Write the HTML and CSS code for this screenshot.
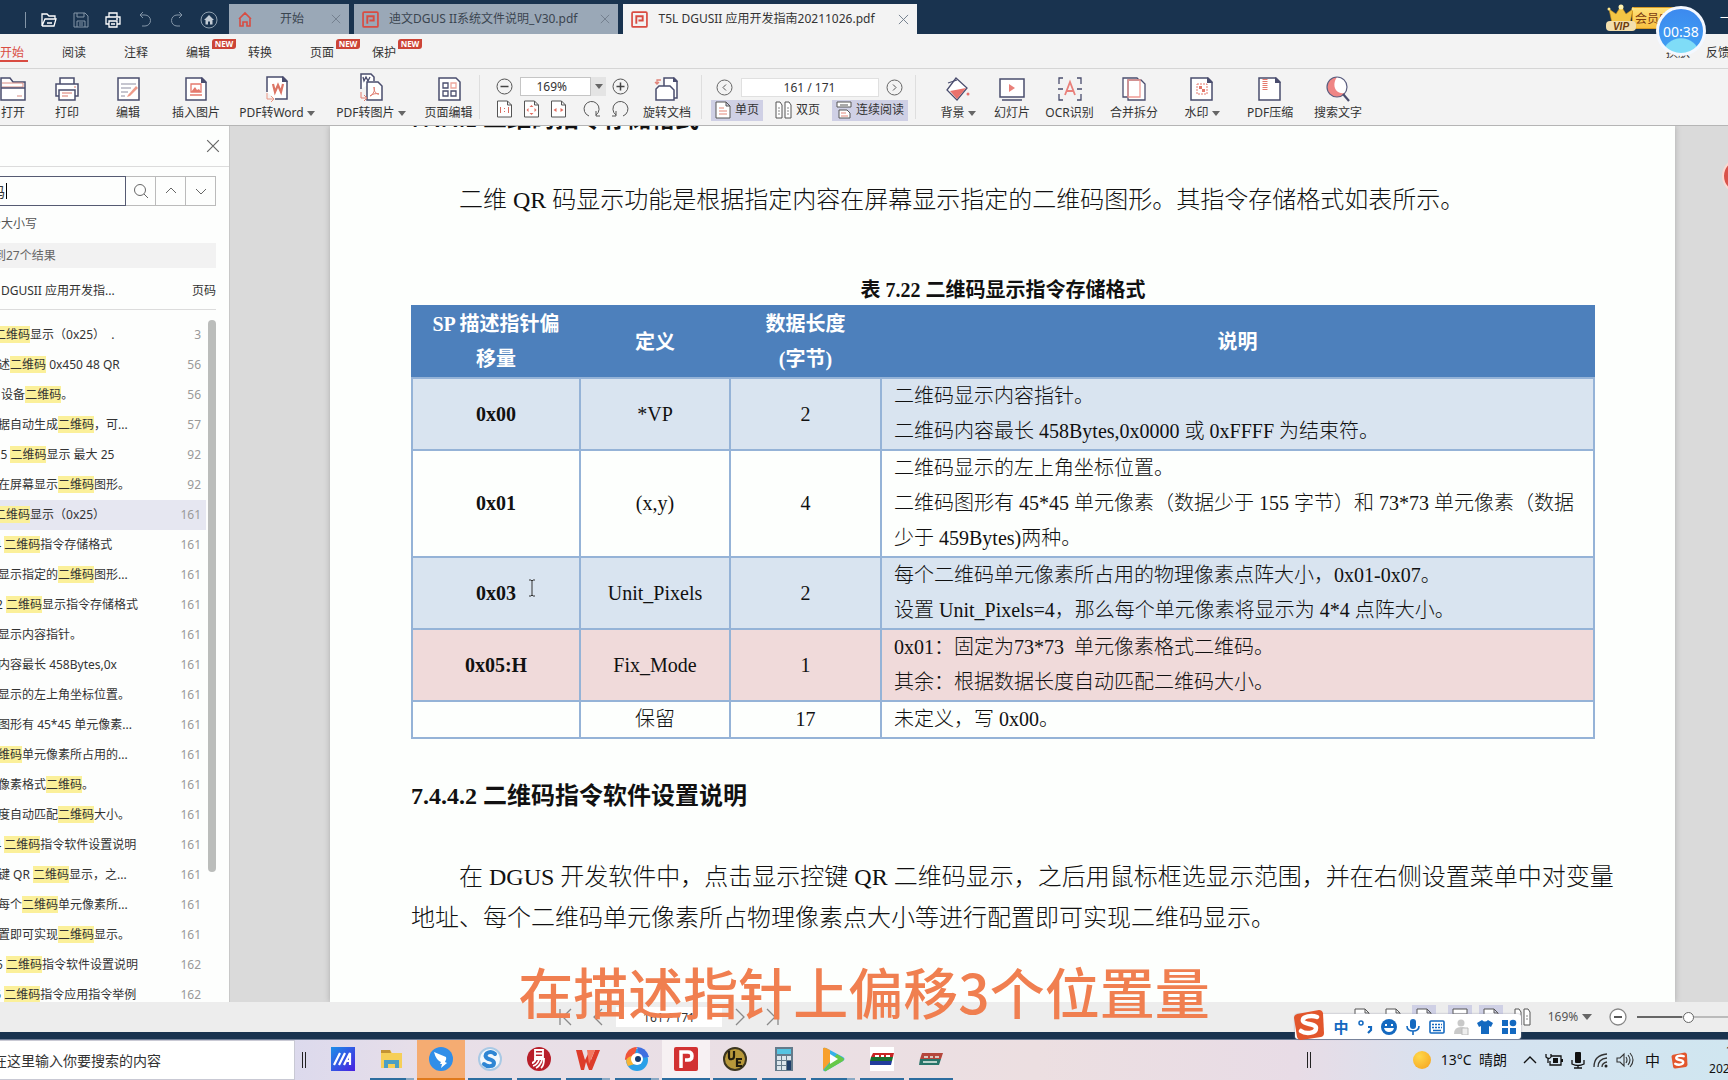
FILE: index.html
```html
<!DOCTYPE html>
<html lang="zh-CN">

<head>
    <meta charset="UTF-8" />
    <meta name="viewport" content="width=device-width, initial-scale=1.0" />
    <title>T5L DGUSII 应用开发指南20211026.pdf</title>
    <link rel="stylesheet" href="styles.css">
</head>

<body>
    <!-- shared shapes -->
    <svg class="defs" aria-hidden="true">
        <symbol id="close" viewBox="0 0 12 12"><path d="M1 1l10 10M11 1L1 11" fill="none" stroke="currentColor" /></symbol>
        <symbol id="pdf" viewBox="0 0 16 16"><rect x="1" y="1" width="14" height="14" rx="1" fill="none" stroke="currentColor" stroke-width="1.6" /><path d="M5 12V5h6v4H7" fill="none" stroke="currentColor" stroke-width="1.8" /></symbol>
        <symbol id="page" viewBox="0 0 16 18"><path d="M1 1h10l4 4v12H1zM11 1v4h4" fill="#fff" stroke="#555" /></symbol>
        <symbol id="sogou" viewBox="0 0 32 32"><path d="M4 5l22-4q3 0 4 3l1 20q0 3-3 4L8 31q-3 0-4-3L1 9q0-3 3-4z" fill="#e2562c" /><path d="M24 8c-5-2-15-1-14 4 1 4 13 2 13 7 0 6-11 6-15 3" fill="none" stroke="#fff" stroke-width="4.5" stroke-linecap="round" /></symbol>
    </svg>

    <header class="titlebar">
        <div class="quick">
            <span class="quick-line"></span>
            <button title="打开"><svg width="16" height="16" viewBox="0 0 16 16"><path d="M1 14V2h5l2 2h6v3M1 14h12l2-7H4L1 14M6 11h5" fill="none" stroke="#fff" stroke-width="1.3" /></svg></button>
            <button title="保存"><svg width="16" height="16" viewBox="0 0 16 16"><path d="M1 1h11l3 3v11H1zM4 1v4h7V1M4 15V9h8v6M6 11h4M6 13h4" fill="none" stroke="#8496a8" /></svg></button>
            <button title="打印"><svg width="16" height="16" viewBox="0 0 16 16"><path d="M4 5V1h8v4M4 12H1V5h14v7h-3M4 9h8v6H4zM6 12h4M11 7h2" fill="none" stroke="#fff" stroke-width="1.3" /></svg></button>
            <button title="撤销"><svg width="16" height="16" viewBox="0 0 16 16"><path d="M3 3h5a5 5 0 0 1 0 11H5M6 0L3 3l3 3" fill="none" stroke="#8496a8" /></svg></button>
            <button title="重做"><svg width="16" height="16" viewBox="0 0 16 16"><path d="M13 3H8a5 5 0 0 0 0 11h3M10 0l3 3-3 3" fill="none" stroke="#8496a8" /></svg></button>
            <button title="首页"><svg width="18" height="18" viewBox="0 0 18 18"><circle cx="9" cy="9" r="8" fill="none" stroke="#8fa0b0" /><path d="M9 4L4 9h1.500v4.500h2.500v-3h2v3h2.500V9H14z" fill="#c3ccd5" /></svg></button>
        </div>
        <nav class="tabs">
            <div class="tab tab-home">
                <svg class="red" width="16" height="16" viewBox="0 0 16 16"><path d="M2 8l6-6 6 6M3 7v8h3v-4h4v4h3V7" fill="none" stroke="currentColor" stroke-width="1.600" /></svg>
                <a href="#start">开始</a>
                <button title="关闭"><svg width="10" height="10"><use href="#close" /></svg></button>
            </div>
            <div class="tab tab-doc">
                <svg class="red" width="17" height="17"><use href="#pdf" /></svg>
                <a href="#v30">迪文DGUS II系统文件说明_V30.pdf</a>
                <button title="关闭"><svg width="10" height="10"><use href="#close" /></svg></button>
            </div>
            <div class="tab tab-doc active">
                <svg class="red" width="17" height="17"><use href="#pdf" /></svg>
                <a href="#t5l">T5L DGUSII 应用开发指南20211026.pdf</a>
                <button title="关闭"><svg width="11" height="11"><use href="#close" /></svg></button>
            </div>
        </nav>
        <div class="vip">
            <svg width="30" height="28" viewBox="0 0 30 28"><path d="M3 5l7 5 5-8 5 8 7-5-3 14H6z" fill="#f4c544" stroke="#c98e1c" stroke-width=".6" /><circle cx="15" cy="3" r="2.500" fill="#fff2b0" /><circle cx="3" cy="5" r="1.500" fill="#ffe58a" /><circle cx="27" cy="5" r="1.500" fill="#ffe58a" /><rect x="0" y="17" width="30" height="10" rx="4" fill="#f3dfae" /><text x="15" y="26" text-anchor="middle" class="vip-text">VIP</text></svg>
            <a href="#vip">会员中心</a>
        </div>
        <button class="minimize" title="最小化">—</button>
    </header>

    <nav class="menu">
        <a class="current" href="#m1">开始</a>
        <a href="#m2">阅读</a>
        <a href="#m3">注释</a>
        <a href="#m4">编辑<sup>NEW</sup></a>
        <a href="#m5">转换</a>
        <a href="#m6">页面<sup>NEW</sup></a>
        <a href="#m7">保护<sup>NEW</sup></a>
        <span class="menu-right"><a href="#skin">换肤</a><a href="#feedback">反馈</a></span>
    </nav>

    <div class="toolbar">
        <button class="tool w-s first"><svg width="26" height="26" viewBox="0 0 26 26"><path d="M1 24V2h9l3 4h12v18z" fill="#fff" stroke="#4a4d6e" stroke-width="1.500" /><path d="M2 7h21v4H2M17 20h5" fill="none" stroke="#d98a80" /><path d="M1 12h24" stroke="#4a4d6e" stroke-width="1.500" /></svg><span>打开</span></button>
        <button class="tool w-s"><svg width="26" height="26" viewBox="0 0 26 26"><path d="M6 8V2h14v6M5 20H2V8h22v12h-3M5 14h16v10H5z" fill="#fff" stroke="#4a4d6e" stroke-width="1.500" /><path d="M8 17h10M8 20h6M20 11h2" stroke="#d9776b" /></svg><span>打印</span></button>
        <button class="tool w-m"><svg width="26" height="26" viewBox="0 0 26 26"><rect x="3" y="2" width="21" height="22" fill="#fff" stroke="#4a4d6e" stroke-width="1.500" /><path d="M6 8h15M6 12h10M6 16h7M6 20h4" stroke="#8d8da0" /><path d="M13 19l8-9 2 2-8 8-3 1z" fill="#ee9c8b" /></svg><span>编辑</span></button>
        <button class="tool w-m"><svg width="26" height="26" viewBox="0 0 26 26"><path d="M3 2h16l4 4v18H3z" fill="#fff" stroke="#4a4d6e" stroke-width="1.500" /><path d="M18 1l6 6h-6z" fill="#4a4d6e" /><path d="M8 8h10v8H8zM7 19h12" fill="none" stroke="#e5796d" stroke-width="1.300" /><path d="M8 16l4-5 2 3 2-1 2 3z" fill="#e5796d" /></svg><span>插入图片</span></button>
        <button class="tool w-l"><svg width="26" height="26" viewBox="0 0 26 26"><path d="M3 16V1h16l4 4v18H11" fill="#fff" stroke="#4a4d6e" stroke-width="1.500" /><path d="M18 0l6 6h-6z" fill="#4a4d6e" /><path d="M9 8l2 8 3-7 3 7 2-8" fill="none" stroke="#dc7565" stroke-width="2.200" /><path d="M3 17v6h6M7 20l3 3-3 3" fill="none" stroke="#ea9583" /></svg><span>PDF转Word <i class="arrow"></i></span></button>
        <button class="tool w-l"><svg width="26" height="30" viewBox="0 0 26 30"><path d="M3 17V2h10l3 3v4" fill="#fff" stroke="#4a4d6e" stroke-width="1.500" /><path d="M5 5l1 4 2-4 2 4 2-4" fill="none" stroke="#4a4d6e" stroke-width="1.300" /><path d="M9 10h11l4 4v14H9z" fill="#fff" stroke="#4a4d6e" stroke-width="1.500" /><path d="M12 24c4-2 5-6 4-9 0 5 2 7 5 7-4-1-6 0-9 2M3 20v6h5M6 23l3 3-3 3" fill="none" stroke="#e07b6e" /></svg><span>PDF转图片 <i class="arrow"></i></span></button>
        <button class="tool w-p"><svg width="26" height="26" viewBox="0 0 26 26"><path d="M3 2h17l4 4v18H3z" fill="#fff" stroke="#4a4d6e" stroke-width="1.500" /><path d="M7 7h5v5H7zM7 15h5v5H7zM15 15h5v5h-5z" fill="none" stroke="#4a4d6e" stroke-width="1.300" /><path d="M15 7h5v5h-5z" fill="none" stroke="#eda79d" stroke-width="1.300" /></svg><span>页面编辑</span></button>
        <i class="sep"></i>

        <div class="zoom">
            <div class="zoom-row">
                <button title="缩小"><svg width="17" height="17" viewBox="0 0 17 17"><path d="M4.500 8.500h8" stroke="#444" stroke-width="1.500" /><circle cx="8.500" cy="8.500" r="7.500" fill="none" stroke="#555" /></svg></button>
                <span class="zoom-box"><select aria-label="缩放比例"><option>169%</option></select><i class="arrow"></i></span>
                <button title="放大"><svg width="17" height="17" viewBox="0 0 17 17"><path d="M4.500 8.500h8M8.500 4.500v8" stroke="#444" stroke-width="1.500" /><circle cx="8.500" cy="8.500" r="7.500" fill="none" stroke="#555" /></svg></button>
            </div>
            <div class="zoom-row">
                <button title="实际大小"><svg width="17" height="18" viewBox="0 0 16 18"><use href="#page" /><path d="M4 7v6M12 7v6M3.500 8l1-1M11.500 8l1-1M8 8v1M8 11v1" stroke="#d86a5e" /></svg></button>
                <button title="适合页面"><svg width="17" height="18" viewBox="0 0 16 18"><use href="#page" /><path d="M8 5l2 2H6zM8 15l2-2H6zM3 10l2-2v4zM13 10l-2-2v4z" fill="#e36d60" /></svg></button>
                <button title="适合宽度"><svg width="17" height="18" viewBox="0 0 16 18"><use href="#page" /><path d="M3 10l3-2v4zM13 10l-3-2v4z" fill="#e36d60" /></svg></button>
                <button title="顺时针" class="turn"><svg width="18" height="18" viewBox="0 0 18 18"><path d="M6 16A7.500 7.500 0 1 1 13 15M13 11v5h4" fill="none" stroke="#555" /></svg></button>
                <button title="逆时针"><svg width="18" height="18" viewBox="0 0 18 18"><path d="M12 16A7.500 7.500 0 1 0 5 15M5 11v5H1" fill="none" stroke="#555" /></svg></button>
            </div>
        </div>
        <button class="tool w-m"><svg width="26" height="26" viewBox="0 0 26 26"><path d="M10 10V2h10l3 3v17h-4" fill="#fff" stroke="#4a4d6e" stroke-width="1.500" /><path d="M19 1l5 5h-5z" fill="#4a4d6e" /><path d="M5 10h11l4 4v10H2V13z" fill="#fff" stroke="#4a4d6e" stroke-width="1.500" /><path d="M3 8V4h4M1 6l2 2 2-2" fill="none" stroke="#e08278" stroke-width="1.300" /></svg><span>旋转文档</span></button>
        <i class="sep"></i>

        <div class="paging">
            <div class="paging-row">
                <button title="上一页"><svg width="17" height="17" viewBox="0 0 17 17"><circle cx="8.500" cy="8.500" r="7.500" fill="none" stroke="#666" /><path d="M10 5.500l-3 3 3 3" fill="none" stroke="#555" /></svg></button>
                <input type="text" value="161 / 171" aria-label="页码">
                <button title="下一页"><svg width="17" height="17" viewBox="0 0 17 17"><circle cx="8.500" cy="8.500" r="7.500" fill="none" stroke="#666" /><path d="M7 5.500l3 3-3 3" fill="none" stroke="#555" /></svg></button>
            </div>
            <div class="views">
                <button class="on"><svg width="16" height="18" viewBox="0 0 16 18"><use href="#page" /><path d="M4 7h5M4 10h8M4 13h8" stroke="#e28779" /></svg>单页</button>
                <button><svg width="17" height="18" viewBox="0 0 17 18"><path d="M1 1h4l2 3v13H1zM10 1h4l2 3v13h-6z" fill="#fff" stroke="#555" /><path d="M3 7h2M3 10h2M3 13h2M12 7h2M12 10h2M12 13h2" stroke="#888" /></svg>双页</button>
                <button class="on"><svg width="16" height="18" viewBox="0 0 16 18"><path d="M1 1h14v5H1zM3 17V9h8l3 3v5z" fill="#fff" stroke="#555" /><path d="M4 4h8" stroke="#555" /><path d="M5 12h5M5 15h7" stroke="#e28779" /></svg>连续阅读</button>
            </div>
        </div>
        <i class="sep"></i>

        <button class="tool w-s push"><svg width="26" height="26" viewBox="0 0 26 26"><path d="M11 2l11 10-10 12L2 14z" fill="#fff" stroke="#4a4d6e" stroke-width="1.300" /><path d="M5 15l16-3-9 11z" fill="#e9716c" /><path d="M3 7l9-3" stroke="#4a4d6e" stroke-width="1.300" /><circle cx="23" cy="18" r="1.500" fill="#e9716c" /></svg><span>背景 <i class="arrow"></i></span></button>
        <button class="tool w-s"><svg width="26" height="26" viewBox="0 0 26 26"><path d="M1 3h24v18H1zM3 24h20" fill="#fff" stroke="#4a4d6e" stroke-width="1.500" /><path d="M10 8l6 4-6 4z" fill="#e9807a" /></svg><span>幻灯片</span></button>
        <button class="tool w-p"><svg width="26" height="26" viewBox="0 0 26 26"><path d="M6 2H2v6M20 2h4v6M6 24H2v-6M20 24h4v-6M1 13h5M20 13h5" fill="none" stroke="#4a4d6e" stroke-width="1.300" /><path d="M8 19l5-13 5 13M10 15h6" fill="none" stroke="#e9807a" stroke-width="1.800" /></svg><span>OCR识别</span></button>
        <button class="tool w-m"><svg width="26" height="26" viewBox="0 0 26 26"><path d="M2 2h14l3 3v16H2z" fill="#fff" stroke="#4a4d6e" stroke-width="1.300" /><path d="M7 4h13l4 4v16H7z" fill="#fff" stroke="#4a4d6e" stroke-width="1.300" /><path d="M7 4h12v17H7z" fill="none" stroke="#f09a94" stroke-width="1.300" /></svg><span>合并拆分</span></button>
        <button class="tool w-m"><svg width="26" height="26" viewBox="0 0 26 26"><path d="M2 2h17l4 4v18H2z" fill="#fff" stroke="#4a4d6e" stroke-width="1.500" /><path d="M18 1l6 6h-6z" fill="#4a4d6e" /><path d="M8 8h10v10H8z" fill="none" stroke="#e5796d" stroke-dasharray="2 1" /><path d="M10 10h3v3h-3zM13 13h3v3h-3z" fill="#e5796d" /></svg><span>水印 <i class="arrow"></i></span></button>
        <button class="tool w-m"><svg width="26" height="26" viewBox="0 0 26 26"><path d="M2 2h17l4 4v18H2z" fill="#fff" stroke="#4a4d6e" stroke-width="1.500" /><path d="M18 1l6 6h-6z" fill="#4a4d6e" /><path d="M8 3v11" stroke="#e5796d" stroke-width="5" stroke-dasharray="1 1" /></svg><span>PDF压缩</span></button>
        <button class="tool w-m"><svg width="26" height="26" viewBox="0 0 26 26"><circle cx="12" cy="11" r="10" fill="#fff" /><path d="M12 1a10 10 0 1 0 8 16C11 19 6 10 12 1z" fill="#ef8685" /><circle cx="12" cy="11" r="10" fill="none" stroke="#5b5f80" stroke-width="1.200" /><path d="M18 18l6 7" stroke="#4a4d6e" stroke-width="2.200" /></svg><span>搜索文字</span></button>
    </div>

    <main class="workspace">
        <aside class="finder">
            <div class="finder-head"><button title="关闭"><svg width="14" height="14"><use href="#close" /></svg></button></div>
            <div class="finder-body">
                <div class="search-row">
                    <input type="text" value="二维码" aria-label="查找">
                    <span class="caret"></span>
                    <button title="查找"><svg width="16" height="16" viewBox="0 0 16 16"><circle cx="7" cy="7" r="5.500" fill="none" stroke="#666" /><path d="M11 11l4 4" stroke="#666" /></svg></button>
                    <button title="上一个"><svg width="12" height="12" viewBox="0 0 12 12"><path d="M1 8l5-5 5 5" fill="none" stroke="#666" /></svg></button>
                    <button title="下一个"><svg width="12" height="12" viewBox="0 0 12 12"><path d="M1 4l5 5 5-5" fill="none" stroke="#666" /></svg></button>
                </div>
                <label class="match-case"><input type="checkbox">区分大小写</label>
                <p class="found">查找到27个结果</p>
                <div class="list-head"><span>T5L DGUSII 应用开发指...</span><span>页码</span></div>
            </div>
            <div class="results">
                <ul>
                    <li><a href="#r1">7.1 <mark>二维码</mark>显示（0x25）&nbsp; .</a><span>3</span></li>
                    <li><a href="#r2">的描述<mark>二维码</mark> 0x450 48 QR</a><span>56</span></li>
                    <li><a href="#r3">连接 设备<mark>二维码</mark>。</a><span>56</span></li>
                    <li><a href="#r4">用数据自动生成<mark>二维码</mark>，可...</a><span>57</span></li>
                    <li><a href="#r5">: 0x25 <mark>二维码</mark>显示 最大 25</a><span>92</span></li>
                    <li><a href="#r6">内容在屏幕显示<mark>二维码</mark>图形。</a><span>92</span></li>
                    <li class="selected"><a href="#r7">4.4 <mark>二维码</mark>显示（0x25）</a><span>161</span></li>
                    <li><a href="#r8">7.4.4 <mark>二维码</mark>指令存储格式</a><span>161</span></li>
                    <li><a href="#r9">屏幕显示指定的<mark>二维码</mark>图形...</a><span>161</span></li>
                    <li><a href="#r10">表 22 <mark>二维码</mark>显示指令存储格式</a><span>161</span></li>
                    <li><a href="#r11"><mark>维码</mark>显示内容指针。</a><span>161</span></li>
                    <li><a href="#r12"><mark>维码</mark>内容最长 458Bytes,0x</a><span>161</span></li>
                    <li><a href="#r13"><mark>维码</mark>显示的左上角坐标位置。</a><span>161</span></li>
                    <li><a href="#r14"><mark>维码</mark>图形有 45*45 单元像素...</a><span>161</span></li>
                    <li><a href="#r15">个<mark>二维码</mark>单元像素所占用的...</a><span>161</span></li>
                    <li><a href="#r16">单元像素格式<mark>二维码</mark>。</a><span>161</span></li>
                    <li><a href="#r17">据长度自动匹配<mark>二维码</mark>大小。</a><span>161</span></li>
                    <li><a href="#r18">7.4.4 <mark>二维码</mark>指令软件设置说明</a><span>161</span></li>
                    <li><a href="#r19">示控键 QR <mark>二维码</mark>显示，之...</a><span>161</span></li>
                    <li><a href="#r20">址、每个<mark>二维码</mark>单元像素所...</a><span>161</span></li>
                    <li><a href="#r21">行配置即可实现<mark>二维码</mark>显示。</a><span>161</span></li>
                    <li><a href="#r22">表 25 <mark>二维码</mark>指令软件设置说明</a><span>162</span></li>
                    <li><a href="#r23">7.4.5 <mark>二维码</mark>指令应用指令举例</a><span>162</span></li>
                </ul>
                <div class="scrollbar"></div>
            </div>
        </aside>

        <article class="paper">
            <h2>7.4.4.1 二维码指令存储格式</h2>
            <p>二维 QR 码显示功能是根据指定内容在屏幕显示指定的二维码图形。其指令存储格式如表所示。</p>
            <table>
                <caption>表 7.22 二维码显示指令存储格式</caption>
                <colgroup><col class="col-sp"><col class="col-def"><col class="col-len"><col></colgroup>
                <thead>
                    <tr><th>SP 描述指针偏<br>移量</th><th>定义</th><th>数据长度<br>(字节)</th><th>说明</th></tr>
                </thead>
                <tbody>
                    <tr class="blue"><th>0x00</th><td>*VP</td><td>2</td><td>二维码显示内容指针。<br>二维码内容最长 458Bytes,0x0000 或 0xFFFF 为结束符。</td></tr>
                    <tr><th>0x01</th><td>(x,y)</td><td>4</td><td>二维码显示的左上角坐标位置。<br>二维码图形有 45*45 单元像素（数据少于 155 字节）和 73*73 单元像素（数据少于 459Bytes)两种。</td></tr>
                    <tr class="blue"><th>0x03</th><td>Unit_Pixels</td><td>2</td><td>每个二维码单元像素所占用的物理像素点阵大小，0x01-0x07。<br>设置 Unit_Pixels=4，那么每个单元像素将显示为 4*4 点阵大小。</td></tr>
                    <tr class="pink"><th>0x05:H</th><td>Fix_Mode</td><td>1</td><td>0x01：固定为73*73&nbsp; 单元像素格式二维码。<br>其余：根据数据长度自动匹配二维码大小。</td></tr>
                    <tr><th></th><td>保留</td><td>17</td><td>未定义，写 0x00。</td></tr>
                </tbody>
            </table>
            <h2>7.4.4.2 二维码指令软件设置说明</h2>
            <p>在 DGUS 开发软件中，点击显示控键 QR 二维码显示，之后用鼠标框选显示范围，并在右侧设置菜单中对变量<br>地址、每个二维码单元像素所占物理像素点大小等进行配置即可实现二维码显示。</p>
        </article>
        <svg class="ibeam" width="8" height="18" viewBox="0 0 8 18"><path d="M1 1h2l1 1 1-1h2M4 2v14M1 17h2l1-1 1 1h2" fill="none" stroke="#333" /></svg>
        <span class="side-bubble"></span>
    </main>

    <footer class="statusbar">
        <div class="pager">
            <button title="首页"><svg width="14" height="18" viewBox="0 0 14 18"><path d="M1 1v16M12 1L4 9l8 8" fill="none" stroke="#8a8a8a" stroke-width="1.300" /></svg></button>
            <button title="上一页"><svg width="14" height="18" viewBox="0 0 14 18"><path d="M11 1L3 9l8 8" fill="none" stroke="#8a8a8a" stroke-width="1.300" /></svg></button>
            <input type="text" value="161 / 171" aria-label="当前页">
            <button title="下一页"><svg width="14" height="18" viewBox="0 0 14 18"><path d="M3 1l8 8-8 8" fill="none" stroke="#8a8a8a" stroke-width="1.300" /></svg></button>
            <button title="末页"><svg width="14" height="18" viewBox="0 0 14 18"><path d="M2 1l8 8-8 8M13 1v16" fill="none" stroke="#8a8a8a" stroke-width="1.300" /></svg></button>
        </div>
        <div class="status-right">
            <button title="实际大小"><svg width="16" height="18"><use href="#page" /></svg></button>
            <button title="适合页面"><svg width="16" height="18"><use href="#page" /></svg></button>
            <button title="适合宽度" class="on"><svg width="16" height="18"><use href="#page" /></svg></button>
            <button title="连续" class="on gap"><svg width="16" height="18" viewBox="0 0 16 18"><path d="M1 1h14v5H1zM1 17V9h14v8" fill="#fff" stroke="#555" /></svg></button>
            <button title="单页" class="on"><svg width="16" height="18"><use href="#page" /></svg></button>
            <button title="双页"><svg width="17" height="18" viewBox="0 0 17 18"><path d="M1 1h4l2 3v13H1zM10 1h4l2 3v13h-6z" fill="#fff" stroke="#555" /><path d="M12 8h2M12 11h2" stroke="#888" /></svg></button>
            <button class="percent">169% <i class="arrow"></i></button>
            <button title="缩小"><svg width="18" height="18" viewBox="0 0 18 18"><circle cx="9" cy="9" r="8" fill="#fff" stroke="#888" stroke-width="1.300" /><path d="M5 9h8" stroke="#444" stroke-width="1.800" /></svg></button>
            <input type="range" min="0" max="100" value="40" aria-label="缩放">
        </div>
    </footer>

    <div class="taskbar">
        <input class="task-search" type="text" placeholder="在这里输入你要搜索的内容" aria-label="搜索">
        <i class="grip"></i>
        <div class="apps">
            <button title="MA"><svg width="26" height="26" viewBox="0 0 26 26"><defs><linearGradient id="ma" x2="1" y2="1"><stop stop-color="#1b8fe8" /><stop offset="1" stop-color="#4a1fe0" /></linearGradient></defs><path d="M1 1h24v24H1z" fill="url(#ma)" /><path d="M4 19l6-12M9 19l6-12M14 19l6-12v12M17 15h3" stroke="#fff" stroke-width="2.200" fill="none" /></svg></button>
            <button title="文件" class="run more"><svg width="26" height="26" viewBox="0 0 26 26"><path d="M2 4h9l2 3h10v15H2z" fill="#f6cf58" /><path d="M2 4h9l1 3H2z" fill="#c49434" /><path d="M5 22v-8h15v8h-4v-4H9v4z" fill="#4c9fc4" /></svg></button>
            <button title="钉钉" class="run hot"><svg width="26" height="26" viewBox="0 0 26 26"><circle cx="13" cy="13" r="12" fill="#318ee8" /><path d="M6 6l12 5q1 2-1 5l2 1-6 5 1-4h-2l1-2q-5-2-7-10z" fill="#fff" /></svg></button>
            <button title="搜狗浏览器" class="run"><svg width="26" height="26" viewBox="0 0 26 26"><circle cx="13" cy="13" r="11" fill="#f3f8fc" stroke="#a9c9e5" stroke-width="2" /><path d="M18 8c-4-4-11-1-9 3 1 3 8 2 8 6s-7 4-10 1" fill="none" stroke="#2e86d4" stroke-width="4" stroke-linecap="round" /></svg></button>
            <button title="易语言" class="run"><svg width="26" height="26" viewBox="0 0 26 26"><circle cx="13" cy="13" r="12" fill="#b81f2a" /><path d="M9 4h8v7H9zM9 7.500h8M8 13h10q0 7-3 9M10 13q-2 4-4 4M13 14q-2 5-6 6M16 14q-2 6-6 8" fill="none" stroke="#fff" stroke-width="1.800" /></svg></button>
            <button title="WPS" class="run more"><svg width="26" height="26" viewBox="0 0 26 26"><path d="M1 4h6l3 10 3-6 3 6 4-10h5l-8 20h-3l-3-8-2 8H6z" fill="#dd3c2a" /><path d="M12 4h8l-6 14z" fill="#f4775f" /></svg></button>
            <button title="看图" class="run more"><svg width="26" height="26" viewBox="0 0 26 26"><circle cx="13" cy="14" r="11" fill="#2aa0e8" /><path d="M13 1a12 12 0 0 0-12 13l9-3z" fill="#f0543a" /><path d="M13 1q9 0 12 10l-9 1z" fill="#3f6fe0" /><path d="M4 20q-5-8 4-10l3 8z" fill="#f8b432" /><circle cx="13" cy="13" r="6" fill="#fff" /><circle cx="14" cy="13" r="3" fill="#143a6c" /></svg></button>
            <button title="PDF" class="run front"><svg width="26" height="26" viewBox="0 0 26 26"><rect x="1" y="1" width="24" height="24" rx="2" fill="#d23232" /><path d="M8 22V6h7q4 0 4 4t-4 4h-3" fill="none" stroke="#fff" stroke-width="3.500" /></svg></button>
            <button title="UltraEdit" class="run"><svg width="26" height="26" viewBox="0 0 26 26"><circle cx="13" cy="13" r="11" fill="#b7983a" stroke="#3c3620" stroke-width="2" /><path d="M7 5v6q0 3 3 2 2 0 2-3V5M20 13h-5v7h5M15 16.500h4" fill="none" stroke="#211c0c" stroke-width="2.200" /></svg></button>
            <button title="计算器" class="run"><svg width="26" height="26" viewBox="0 0 26 26"><path d="M4 1h18v24H4z" fill="#657b8b" /><path d="M6 3h14v5H6z" fill="#55c4e2" /><path d="M6 10h4v4H6zM11 10h4v4h-4zM6 15h4v4H6zM11 15h4v4h-4zM6 20h4v4H6zM11 20h4v4h-4zM16 10h4v4h-4z" fill="#dce6ec" /><path d="M16 15h4v9h-4z" fill="#1e3e69" /></svg></button>
            <button title="视频" class="run more"><svg width="26" height="26" viewBox="0 0 26 26"><path d="M3 3q0-2 3-1l17 9q3 2 0 4L6 25q-3 1-3-2z" fill="#35b1e8" /><path d="M3 3q0-2 3-1l4 2v12l-7 8z" fill="#f8a02c" /><path d="M4 24L17 8l6 4q2 1 0 3L6 25q-1 1-2-1z" fill="#67c848" /><path d="M10 8l8 5-8 5z" fill="#fff" /></svg></button>
            <button title="DGUS" class="run"><svg width="26" height="26" viewBox="0 0 26 26"><path d="M1 1h24v24H1z" fill="#fff" /><path d="M4 7h21l-1 4H2z" fill="#c82525" /><path d="M2 11h22l-1 4H1z" fill="#1a6f2e" /><path d="M1 15h22l-1 4H1z" fill="#223c9c" /><path d="M6 10h4M12 10h3M17 10h4" stroke="#fff" stroke-width="2" /></svg></button>
            <button title="DWIN" class="run"><svg width="26" height="26" viewBox="0 0 26 26"><path d="M4 7h21l-2 6H2z" fill="#b5473c" /><path d="M2 13h21l-2 6H1z" fill="#28756a" /><path d="M6 11h4M12 11h3M17 11h4M5 16h14" stroke="#e8f2ec" stroke-width="1.500" /></svg></button>
        </div>
        <i class="grip tray-grip"></i>
        <div class="tray">
            <span class="sun"></span>
            <span class="weather">13°C&nbsp; 晴朗</span>
            <button title="展开"><svg width="16" height="16" viewBox="0 0 16 16"><path d="M2 11l6-6 6 6" fill="none" stroke="#111" stroke-width="1.400" /></svg></button>
            <button title="电源"><svg width="18" height="16" viewBox="0 0 18 16"><path d="M6 4h10v9H5V9M1 2v3q3 3 5 0V2M3 6v5" fill="none" stroke="#111" stroke-width="1.300" /><path d="M8 6h5v5H8zM16 7h2v3h-2z" fill="#111" /></svg></button>
            <button title="麦克风"><svg width="16" height="18" viewBox="0 0 16 18"><rect x="5" y="1" width="6" height="11" rx="1" fill="#111" /><path d="M2 9v4q6 3 12 0V9M8 14v3M4 17h8" fill="none" stroke="#111" stroke-width="1.300" /></svg></button>
            <button title="网络"><svg width="16" height="16" viewBox="0 0 16 16"><path d="M1 15Q1 3 14 2M5 15Q5 7 14 6M9 15Q9 11 14 10" fill="none" stroke="#333" stroke-width="1.300" /><circle cx="13" cy="14" r="1.500" fill="#222" /></svg></button>
            <button title="音量"><svg width="18" height="16" viewBox="0 0 18 16"><path d="M1 6h3l4-4v12l-4-4H1zM10 5q2 3 0 6M12 3q4 5 0 10M14 1q6 7 0 14" fill="none" stroke="#333" stroke-width="1.100" /></svg></button>
            <button class="lang">中</button>
            <button title="搜狗"><svg width="17" height="17"><use href="#sogou" /></svg></button>
        </div>
        <div class="clock"><span>14:26</span><span>2021/11/16</span></div>
    </div>

    <!-- things floating over the desktop -->
    <div class="timer">00:38</div>
    <p class="subtitle">在描述指针上偏移3个位置量</p>
    <div class="ime">
        <svg class="ime-logo" width="32" height="32"><use href="#sogou" /></svg>
        <button class="ime-zh">中</button>
        <button title="标点"><svg width="16" height="16" viewBox="0 0 16 16"><circle cx="4" cy="4" r="2" fill="none" stroke="#1469c0" stroke-width="1.500" /><path d="M11 8h3v3l-3 3" fill="none" stroke="#1469c0" stroke-width="2.200" /></svg></button>
        <button title="表情"><svg width="16" height="16" viewBox="0 0 16 16"><circle cx="8" cy="8" r="8" fill="#1469c0" /><path d="M4 5h2v2H4zM10 5h2v2h-2zM3 9h10q-1 4-5 4T3 9z" fill="#fff" /></svg></button>
        <button title="语音"><svg width="16" height="16" viewBox="0 0 16 16"><rect x="5" y="0" width="6" height="10" rx="3" fill="#1469c0" /><path d="M2 7q0 5 6 5t6-5M8 12v4" fill="none" stroke="#1469c0" stroke-width="1.600" /></svg></button>
        <button title="键盘"><svg width="16" height="16" viewBox="0 0 16 16"><rect x="1" y="2" width="14" height="12" rx="1" fill="none" stroke="#1469c0" stroke-width="1.600" /><path d="M3 5.500h10M3 8.500h10" stroke="#1469c0" stroke-width="1.600" stroke-dasharray="2 1" /><path d="M4 11.500h8" stroke="#1469c0" stroke-width="1.500" /></svg></button>
        <button title="用户"><svg width="16" height="16" viewBox="0 0 16 16"><circle cx="8" cy="4" r="3.500" fill="#c9c9c9" /><path d="M1 15q0-7 7-7t7 7z" fill="#c9c9c9" /><path d="M9 9h6v7H9z" fill="#eee" stroke="#bbb" /></svg></button>
        <button title="皮肤"><svg width="16" height="16" viewBox="0 0 16 16"><path d="M5 1q3 3 6 0l5 3-2 4-2-1v8H4V7L2 8 0 4z" fill="#1469c0" /></svg></button>
        <button title="工具"><svg width="16" height="16" viewBox="0 0 16 16"><path d="M1 1h6v6H1zM1 9h6v6H1zM9 9h6v6H9z" fill="#1469c0" /><circle cx="12" cy="4" r="3.300" fill="#1469c0" /></svg></button>
    </div>
</body>

</html>
```
FILE: styles.css
```css
:root {
    --navy: #19334f;
    --bar: #f3f3f3;
    --line: #d5d5d5;
    --red: #d94c42;
    --picked: #cfd0e5;
    --table-line: #95b3d7;
    --ui: "Noto Sans", "Noto Sans CJK SC", sans-serif;
    --doc: "Liberation Serif", "Noto Sans CJK SC", serif;
}

* {
    margin: 0;
    padding: 0;
    box-sizing: border-box;
}

body {
    height: 100vh;
    display: flex;
    flex-direction: column;
    overflow: hidden;
    position: relative;
    background: var(--navy);
    color: #333;
    font-family: var(--ui);
    font-size: 12px;
    line-height: 18px;
}

button,
input,
select {
    font: inherit;
    color: inherit;
    background: none;
    border: none;
    outline: none;
    flex: none;
}

button {
    display: flex;
    align-items: center;
    justify-content: center;
    white-space: nowrap;
    cursor: pointer;
}

a {
    color: inherit;
    text-decoration: none;
    white-space: nowrap;
}

svg {
    display: block;
    flex: none;
}

.defs {
    position: absolute;
    width: 0;
    height: 0;
}

.arrow {
    display: inline-block;
    border: 4px solid transparent;
    border-top: 5px solid #666;
    border-bottom: none;
    vertical-align: 1px;
}

/* title bar */
.titlebar {
    flex: none;
    height: 34px;
    display: flex;
    align-items: flex-end;
    background: var(--navy);
}

.quick {
    width: 229px;
    height: 28px;
    padding-left: 25px;
    display: flex;
    align-items: center;
}

.quick button {
    width: 32px;
}

.quick-line {
    width: 1px;
    height: 16px;
    margin-right: 7px;
    background: #8496a8;
}

.tabs {
    display: flex;
    gap: 5px;
}

.tab {
    height: 30px;
    display: flex;
    align-items: center;
    padding: 0 8px;
    background: #9aa8b7;
    color: #3a4550;
}

.tab a {
    flex: 1;
}

.tab button {
    color: #6d7a88;
}

.tab-home {
    width: 120px;
}

.tab-home a {
    text-align: center;
}

.tab-doc {
    gap: 10px;
}

.tab-doc button {
    margin-left: 13px;
}

.active {
    background: var(--bar);
    color: #333;
}

.red {
    color: var(--red);
}

.vip {
    margin-left: auto;
    margin-right: 34px;
    height: 32px;
    display: flex;
    align-items: center;
    color: #7c3c10;
}

.vip a {
    height: 22px;
    padding: 1px 2px;
    margin-left: -4px;
    line-height: 20px;
    border: 1px solid #d79b25;
    background: linear-gradient(#ffe27c, #f8c140);
}

.vip svg {
    position: relative;
}

.vip-text {
    font: italic bold 10px "Liberation Sans", sans-serif;
    fill: #6b3a0a;
}

.minimize {
    height: 34px;
    margin-right: -4px;
    color: #fff;
}

/* menu */
.menu {
    flex: none;
    height: 34px;
    display: flex;
    background: var(--bar);
}

.menu a {
    position: relative;
    width: 62px;
    height: 28px;
    line-height: 37px;
}

.menu .current {
    color: var(--red);
}

.current::after {
    content: "";
    position: absolute;
    left: 0;
    bottom: 0;
    width: 28px;
    height: 2px;
    background: var(--red);
}

.menu sup {
    position: absolute;
    left: 26px;
    top: 5px;
    width: 24px;
    height: 10px;
    border-radius: 3px 0 3px 0;
    background: #cc4437;
    color: #fff;
    font-size: 8px;
    font-weight: bold;
    line-height: 10px;
    text-align: center;
}

.menu-right {
    display: flex;
    margin-left: auto;
    margin-right: -2px;
    gap: 16px;
}

.menu-right a {
    width: auto;
}

/* tool bar */
.toolbar {
    flex: none;
    height: 58px;
    display: flex;
    align-items: center;
    background: var(--bar);
    border-top: 1px solid var(--line);
    border-bottom: 1px solid #b5b5b5;
}

.tool {
    height: 54px;
    padding-bottom: 2px;
    flex-direction: column;
    justify-content: flex-end;
    gap: 2px;
}

.first {
    margin-left: -14px;
}

.w-s {
    width: 54px;
}

.w-m {
    width: 68px;
}

.w-l {
    width: 94px;
}

.w-p {
    width: 61px;
}

.push {
    margin-left: 15px;
}

.sep {
    flex: none;
    width: 1px;
    height: 44px;
    background: #dedede;
}

.zoom,
.paging {
    display: flex;
    flex-direction: column;
    gap: 4px;
}

.zoom {
    margin: 0 4px 0 16px;
    width: 133px;
}

.zoom-row,
.paging-row {
    display: flex;
    align-items: center;
    justify-content: space-between;
}

.zoom-box {
    width: 86px;
    display: flex;
    align-items: center;
    background: #e4e4e4;
}

.zoom-box .arrow {
    margin-left: 4px;
}

.zoom select {
    width: 71px;
    height: 19px;
    padding-left: 16px;
    border: 1px solid #c5c5c5;
    appearance: none;
    background: #fff;
}

.turn {
    margin-left: 6px;
}

.paging {
    gap: 3px;
    margin: 4px 7px 0 9px;
}

.paging-row {
    padding: 0 5px;
    gap: 7px;
}

.paging input {
    width: 138px;
    height: 19px;
    text-align: center;
    background: #fff;
    border: 1px solid #e0e0e0;
}

.views {
    display: flex;
    gap: 8px;
}

.views button {
    height: 21px;
    padding: 0 4px;
    gap: 4px;
}

.views .on {
    background: var(--picked);
}

/* work area */
.workspace {
    flex: 1;
    min-height: 0;
    display: flex;
    position: relative;
    overflow: hidden;
    background: #dadada;
}

.finder {
    flex: none;
    width: 276px;
    margin-left: -46px;
    display: flex;
    flex-direction: column;
    background: #fdfefd;
    border-right: 1px solid #c8c8c8;
}

.finder-head {
    height: 41px;
    padding-right: 9px;
    display: flex;
    align-items: center;
    justify-content: flex-end;
    border-bottom: 1px solid #dcdcdc;
    color: #666;
}

.finder-body {
    padding: 9px 13px 0 0;
    display: flex;
    flex-direction: column;
}

.search-row {
    display: flex;
    position: relative;
}

.search-row input {
    flex: 1;
    min-width: 0;
    height: 30px;
    padding-left: 8px;
    border: 1px solid #555a72;
    font-size: 14px;
}

.search-row button {
    width: 30px;
    height: 30px;
    border: 1px solid #bbb;
    border-left: none;
}

.caret {
    position: absolute;
    left: 52px;
    top: 7px;
    width: 1px;
    height: 16px;
    background: #000;
}

.match-case {
    display: flex;
    align-items: center;
    gap: 10px;
    height: 37px;
    padding-bottom: 2px;
    color: #555;
}

.found {
    height: 25px;
    padding-left: 16px;
    line-height: 25px;
    background: #f2f2f2;
    color: #666;
}

.list-head {
    height: 42px;
    padding: 4px 0 0 24px;
    display: flex;
    align-items: center;
    justify-content: space-between;
    border-bottom: 1px solid #dcdcdc;
}

.results {
    flex: 1;
    min-height: 0;
    display: flex;
    gap: 2px;
    padding: 10px 13px 0 0;
    overflow: hidden;
}

.results ul {
    flex: 1;
    list-style: none;
}

.results li {
    height: 30px;
    padding: 0 5px 0 20px;
    display: flex;
    align-items: center;
    justify-content: space-between;
    white-space: nowrap;
}

.results li span {
    color: #999;
}

.results .selected {
    background: #e6e7f1;
}

mark {
    background: #fbf09a;
    color: inherit;
}

.scrollbar {
    width: 8px;
    height: 81%;
    border-radius: 4px;
    background: #bbbdbb;
}

/* document page */
.paper {
    flex: 1;
    min-width: 0;
    margin: 0 53px 0 100px;
    padding: 0 80px 0 81px;
    background: #fdfffd;
    box-shadow: 0 0 6px #aaa;
    color: #111;
    font-family: var(--doc);
    font-size: 24px;
    line-height: 41px;
}

.paper h2 {
    margin: 37px 0 40px;
    font-size: 24px;
}

.paper h2:first-child {
    margin-top: -27px;
}

.paper p {
    text-indent: 48px;
    white-space: nowrap;
    font-weight: 300;
}

.paper table {
    width: 100%;
    margin-top: 54px;
    table-layout: fixed;
    border-collapse: collapse;
    font-size: 20px;
    line-height: 35px;
    text-align: center;
}

.paper caption {
    font-weight: bold;
    line-height: 30px;
}

.col-sp {
    width: 168px;
}

.col-def {
    width: 150px;
}

.col-len {
    width: 151px;
}

th,
td {
    border: 2px solid var(--table-line);
    vertical-align: middle;
}

td {
    font-weight: 300;
}

thead th {
    border-color: #4d80bc;
    border-bottom-color: var(--table-line);
    background: #4d80bc;
    color: #fff;
}

td:last-child {
    padding: 0 12px;
    text-align: left;
}

.blue {
    background: #d9e4f0;
}

.pink {
    background: #f0dada;
}

.ibeam {
    position: absolute;
    left: 528px;
    top: 453px;
}

.side-bubble {
    position: absolute;
    right: -30px;
    top: 32px;
    width: 36px;
    height: 36px;
    border: 2px solid #fbd9d2;
    border-radius: 50%;
    background: #d9534a;
}

/* status bar */
.statusbar {
    flex: none;
    height: 30px;
    margin-bottom: 7px;
    display: flex;
    align-items: center;
    justify-content: space-between;
    background: #ededed;
}

.pager {
    display: flex;
    align-items: center;
    gap: 18px;
    padding-left: 559px;
}

.pager input {
    width: 106px;
    height: 20px;
    margin: 0 -7px;
    text-align: center;
    background: #fff;
}

.status-right {
    display: flex;
    align-items: center;
    gap: 7px;
    margin-right: -12px;
}

.status-right button {
    width: 24px;
    height: 24px;
}

.status-right .on {
    background: var(--picked);
}

.status-right .gap {
    margin-left: 5px;
}

.status-right .percent {
    width: 58px;
    color: #555;
}

.percent .arrow {
    margin-left: 4px;
    border-width: 5px;
    border-top-width: 6px;
    border-bottom: none;
}

.status-right input {
    width: 103px;
    height: 16px;
    appearance: none;
    background: linear-gradient(to right, #666 45px, #bbb 45px) no-repeat 0 7px / 100% 2px;
}

.status-right input::-webkit-slider-thumb {
    appearance: none;
    width: 11px;
    height: 11px;
    margin-left: 9px;
    border: 1px solid #666;
    border-radius: 50%;
    background: #fff;
}

/* windows task bar */
.taskbar {
    flex: none;
    height: 41px;
    display: flex;
    align-items: center;
    border-top: 1px solid #6d7c95;
    background: linear-gradient(to right, #d9d8ee 15%, #e8dfe8 25%, #ecdfe1 60%, #e8dce6 75%, #d6e2f0 84%, #d0e6f0);
    color: #111;
}

.task-search {
    width: 305px;
    height: 40px;
    margin-left: -10px;
    padding-left: 2px;
    background: #fff;
    border: 1px solid #c9c9d4;
    font-size: 14px;
}

.task-search::placeholder {
    color: #333;
}

.grip {
    flex: none;
    width: 4px;
    height: 16px;
    margin: 0 13px 0 7px;
    border: 1px solid #222;
    border-width: 0 1px;
}

.apps {
    display: flex;
    gap: 1px;
    align-self: stretch;
}

.apps button {
    width: 48px;
    border-bottom: 2px solid transparent;
}

.apps .run {
    border-image: linear-gradient(to right, transparent 4px, #2d6d9f 4px, #2d6d9f 44px, transparent 44px) 2;
}

.apps .more {
    border-image: linear-gradient(to right, transparent 4px, #2d6d9f 4px, #2d6d9f 37px, #8aa9c4 37px, #8aa9c4 44px, transparent 44px) 2;
}

.apps .hot {
    background: #f5ac72;
    border-image: none;
    border-bottom-color: #e07a1c;
}

.apps .front {
    background: #f7f1f3;
    border-image: none;
    border-bottom-color: #2d6d9f;
}

.tray-grip {
    margin: 0 0 0 auto;
}

.tray {
    display: flex;
    align-items: center;
    gap: 7px;
    margin: 0 18px 0 102px;
}

.sun {
    width: 18px;
    height: 18px;
    border-radius: 50%;
    background: radial-gradient(circle at 35% 30%, #ffd84a, #f5a01c);
}

.weather {
    margin: 0 8px 0 3px;
    font-size: 14px;
    white-space: nowrap;
}

.lang {
    font-size: 15px;
    margin: 0 4px;
}

.clock {
    flex: none;
    width: 70px;
    margin-right: -48px;
    display: flex;
    flex-direction: column;
    align-items: center;
    white-space: nowrap;
}

/* floating items */
.timer {
    position: absolute;
    right: 22px;
    top: 6px;
    width: 50px;
    height: 50px;
    border: 3px solid #f4f8ff;
    border-radius: 50%;
    background: radial-gradient(circle at 50% 110%, #7fdcf7 35%, #3f9bf2 37%, #3c87ee);
    color: #fff;
    font-size: 14px;
    line-height: 46px;
    text-align: center;
}

.subtitle {
    position: absolute;
    left: 0;
    right: 0;
    bottom: 54px;
    color: #f07f50;
    font-family: "Noto Sans CJK SC", sans-serif;
    font-size: 55px;
    font-weight: 500;
    line-height: 72px;
    text-align: center;
}

.ime {
    position: absolute;
    right: 207px;
    bottom: 41px;
    height: 25px;
    padding: 0 4px;
    display: flex;
    align-items: center;
    gap: 8px;
    border-radius: 3px;
    background: #fff;
    box-shadow: 0 0 2px #99a;
}

.ime-logo {
    margin: -3px 0 0 -6px;
}

.ime-zh {
    width: 16px;
    color: #1469c0;
    font-size: 15px;
    font-weight: bold;
}
```
